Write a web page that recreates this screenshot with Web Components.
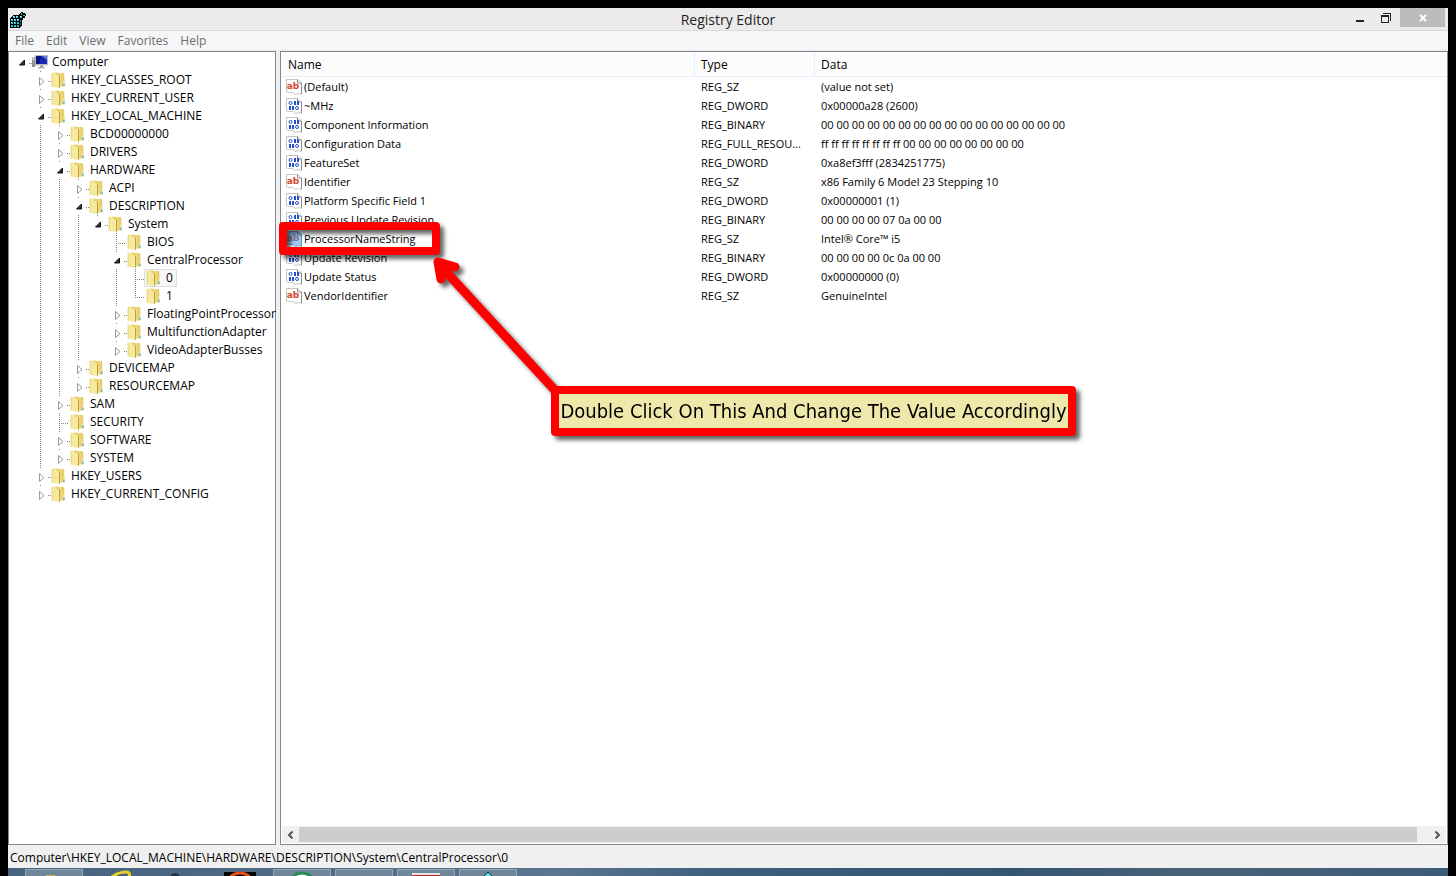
<!DOCTYPE html>
<html lang="en">
<head>
<meta charset="utf-8">
<title>Registry Editor</title>
<style>
  html, body { height: 100%; }
  body {
    margin: 0;
    background: #000;
    color: #000;
    font: 12px/18px "Open Sans", "Noto Sans", sans-serif;
    overflow: hidden;
  }
</style>
</head>
<body>
<reg-desktop>
  <reg-window>
    <reg-titlebar slot="title">Registry Editor</reg-titlebar>
    <reg-menubar slot="menu">
      <reg-menu>File</reg-menu>
      <reg-menu>Edit</reg-menu>
      <reg-menu>View</reg-menu>
      <reg-menu>Favorites</reg-menu>
      <reg-menu>Help</reg-menu>
    </reg-menubar>
    <reg-tree slot="tree">
      <reg-node class="root" label="Computer" icon="computer" state="open">
        <reg-node label="HKEY_CLASSES_ROOT" state="closed"></reg-node>
        <reg-node label="HKEY_CURRENT_USER" state="closed"></reg-node>
        <reg-node label="HKEY_LOCAL_MACHINE" state="open">
          <reg-node label="BCD00000000" state="closed"></reg-node>
          <reg-node label="DRIVERS" state="closed"></reg-node>
          <reg-node label="HARDWARE" state="open">
            <reg-node label="ACPI" state="closed"></reg-node>
            <reg-node label="DESCRIPTION" state="open">
              <reg-node label="System" state="open">
                <reg-node label="BIOS"></reg-node>
                <reg-node label="CentralProcessor" state="open">
                  <reg-node label="0" selected></reg-node>
                  <reg-node label="1"></reg-node>
                </reg-node>
                <reg-node label="FloatingPointProcessor" state="closed"></reg-node>
                <reg-node label="MultifunctionAdapter" state="closed"></reg-node>
                <reg-node label="VideoAdapterBusses" state="closed"></reg-node>
              </reg-node>
            </reg-node>
            <reg-node label="DEVICEMAP" state="closed"></reg-node>
            <reg-node label="RESOURCEMAP" state="closed"></reg-node>
          </reg-node>
          <reg-node label="SAM" state="closed"></reg-node>
          <reg-node label="SECURITY"></reg-node>
          <reg-node label="SOFTWARE" state="closed"></reg-node>
          <reg-node label="SYSTEM" state="closed"></reg-node>
        </reg-node>
        <reg-node label="HKEY_USERS" state="closed"></reg-node>
        <reg-node label="HKEY_CURRENT_CONFIG" state="closed"></reg-node>
      </reg-node>
    </reg-tree>
    <reg-values slot="values"></reg-values>
    <span slot="status">Computer\HKEY_LOCAL_MACHINE\HARDWARE\DESCRIPTION\System\CentralProcessor\0</span>
  </reg-window>
  <desk-taskbar></desk-taskbar>
  <note-callout slot="notes">Double Click On This And Change The Value Accordingly</note-callout>
</reg-desktop>

<script>
const define = (name, html, setup) => {
  const tpl = document.createElement('template');
  tpl.innerHTML = html;
  customElements.define(name, class extends HTMLElement {
    constructor() {
      super();
      this.attachShadow({ mode: 'open' }).append(tpl.content.cloneNode(true));
    }
    connectedCallback() { if (setup) setup(this, this.shadowRoot); }
  });
};

define('reg-desktop', `
  <style>
    :host { display: flex; flex-direction: column; box-sizing: border-box; height: 100vh; padding: 8px 8px 0; position: relative; }
    ::slotted(reg-window) { flex: 1; min-height: 0; }
  </style>
  <slot></slot><slot name="notes"></slot>`);

define('reg-window', `
  <style>
    :host { display: flex; flex-direction: column; background: #f0f0f0; }
    main { flex: 1; display: flex; gap: 4px; min-height: 0; }
    ::slotted(reg-tree) { flex: 0 0 268px; min-width: 0; }
    ::slotted(reg-values) { flex: 1; min-width: 0; }
    footer { height: 23px; line-height: 24px; padding: 1px 0 0 2px; white-space: nowrap; box-sizing: border-box; }
  </style>
  <slot name="title"></slot>
  <slot name="menu"></slot>
  <main><slot name="tree"></slot><slot name="values"></slot></main>
  <footer><slot name="status"></slot></footer>`);

define('reg-titlebar', `
  <style>
    :host { display: grid; grid-template-columns: 1fr auto 1fr; height: 22px; background: #ebebeb; border-bottom: 1px solid #d9d9d9; }
    h1 { margin: 0; font-size: 14px; line-height: 24px; font-weight: 400; color: #222; }
    .app { width: 16px; height: 16px; margin: 4px 0 0 2px; }
    .buttons { display: flex; justify-content: flex-end; padding-right: 3px; }
    button { border: 0; padding: 0; background: none; width: 26px; height: 19px; }
    button.close { width: 45px; background: #bcbcbc; margin-left: 1px; }
    svg { display: block; margin: 0 auto; }
  </style>
  <svg class="app" viewBox="0 0 16 16" aria-hidden="true" shape-rendering="crispEdges">
    <path d="M2 4h1v-1h6v-1h1v-1h1v-1h2v1h2v1h1v2h-1v2h-2v2h-1v6h-1v1h-1v1H0V6h1V5h1z" fill="#000"/>
    <path d="M3 4h2v2H3zM6 4h2v2H6zM1 7h2v2H1zM4 7h2v2H4zM7 7h2v2H7zM1 10h2v2H1zM4 10h2v2H4zM7 10h2v2H7zM1 13h2v2H1zM4 13h2v2H4zM7 13h2v2H7zM10 4h2v2h-2zM11 1h1v2h-1zM13 3h2v1h-2z" fill="#20cdd2"/>
    <path d="M3 4h1v1H3zM6 4h1v1H6zM1 7h1v1H1zM4 7h1v1H4zM7 7h1v1H7zM1 10h1v1H1zM4 10h1v1H4zM10 4h1v1h-1z" fill="#e4ffff"/>
    <path d="M10 8h1v2h-1zM10 11h1v2h-1z" fill="#0d8186"/>
  </svg>
  <h1><slot></slot></h1>
  <div class="buttons">
    <button aria-label="Minimize"><svg width="10" height="10" viewBox="0 0 10 10"><path d="M1 7h8v2H1z" fill="#222"/></svg></button>
    <button aria-label="Restore"><svg width="10" height="10" viewBox="0 0 10 10" shape-rendering="crispEdges"><path d="M2 0h8v8H9V1H2zM0 2h8v8H0zM1 4v5h6V4z" fill="#222" fill-rule="evenodd"/></svg></button>
    <button class="close" aria-label="Close"><svg width="8" height="8" viewBox="0 0 8 8"><path d="M1 1l6 6M7 1L1 7" stroke="#fff" stroke-width="2"/></svg></button>
  </div>`);

define('reg-menubar', `
  <style>
    :host { display: flex; height: 18px; background: #f5f6f7; border-bottom: 1px solid #e8e9ea; padding: 0 0 1px 1px; }
  </style>
  <slot></slot>`);

define('reg-menu', `
  <style>
    :host { display: block; }
    button { border: 0; background: none; font: inherit; line-height: 20px; color: #6d6d6d; padding: 0 6px; }
  </style>
  <button><slot></slot></button>`);

define('reg-tree', `
  <style>
    :host { display: block; box-sizing: border-box; background: #fff; border: 1px solid #828790; padding: 1px 0 0 3px; }
  </style>
  <slot></slot>`);

const folder = `<svg width="16" height="16" viewBox="0 0 16 16" aria-hidden="true">
  <defs>
    <linearGradient id="l" x1="0" x2="1"><stop offset="0" stop-color="#e9d478"/><stop offset=".4" stop-color="#f8eea6"/><stop offset="1" stop-color="#dfc560"/></linearGradient>
    <linearGradient id="r" x1="0" x2="1"><stop offset="0" stop-color="#cfae48"/><stop offset=".35" stop-color="#f0dc80"/><stop offset="1" stop-color="#e3c962"/></linearGradient>
  </defs>
  <path d="M6 1h6.500l.8 1v12.500H6z" fill="url(#r)"/>
  <path d="M.6 1 5 .3 7.600 1v14L5 15.600.6 14.500z" fill="url(#l)"/>
  <path d="M4.500 2.500 8 3.800V16l-3.500-1.200z" fill="#f6eaa0"/>
  <path d="M8 3.800 9 3.400v12L8 16z" fill="#c09c3a"/>
  <path d="M12 8.500h1.700v5.800L12 15z" fill="#f0e6b4"/>
  <path d="M12.300 11.500h1.200v2.500h-1.200z" fill="#3aa6ea"/></svg>`;
const computer = `<svg width="16" height="16" viewBox="0 0 16 16" aria-hidden="true">
  <path d="M0 3.5h3V13H0z" fill="#8d9092"/><path d="M.6 4.3h1.6v2H.6z" fill="#e8eaea"/><path d="M1 9h1v2H1z" fill="#7dc26b"/>
  <path d="M3 1h13v10.5H3z" fill="#b9bdc0"/><path d="M4 2h11v8H4z" fill="#1426b4"/>
  <path d="M4 2h5L7 10H4z" fill="#0a1580"/><path d="M10 2h5v4z" fill="#5a7be8"/>
  <path d="M8 11.500h3V13H8z" fill="#90959a"/><path d="M6 13h7v1.500H6z" fill="#b0b4b8"/></svg>`;
const twisties = {
  open: `<path d="M5 2h12v15H5z" fill="#fff"/><path d="M12.500 7v5H7.500z" fill="#333" stroke="#111"/>`,
  closed: `<path d="M5 2h12v15H5z" fill="#fff"/><path d="M8.500 6.500v8l4.500-4z" fill="#fff" stroke="#999"/>`
};

define('reg-node', `
  <style>
    :host {
      display: block;
      background: repeating-linear-gradient(#7f7f7f 0 1px, transparent 1px 2px) 9px 0 / 1px 100% no-repeat;
    }
    :host(:last-of-type) { background-size: 1px 10px; }
    :host(.root) { background: none; }
    .row { display: flex; height: 18px; }
    .twisty { flex: none; width: 18px; height: 18px; overflow: visible; }
    button {
      display: flex; align-items: center; gap: 4px; height: 18px; box-sizing: border-box;
      border: 1px solid transparent; background: none; padding: 0 3px 0 1px;
      font: inherit; line-height: 16px; color: #000; white-space: nowrap;
    }
    :host([selected]) button { background: #f7f7f7; border-color: #dedede; }
    svg { flex: none; }
    .kids { padding-left: 19px; }
  </style>
  <div class="row"><svg class="twisty" viewBox="0 0 18 18" aria-hidden="true"></svg><button role="treeitem"></button></div>
  <div class="kids"><slot></slot></div>`,
  (el, root) => {
    const state = el.getAttribute('state');
    const dots = state ? [17, 19] : [9, 11, 13, 15, 17];
    root.querySelector('.twisty').innerHTML = (twisties[state] || '') +
      dots.map(x => `<rect x="${x}" y="10" width="1" height="1" fill="#7f7f7f"/>`).join('');
    const b = root.querySelector('button');
    b.innerHTML = el.getAttribute('icon') ? computer : folder;
    const s = document.createElement('span');
    s.textContent = el.getAttribute('label');
    b.append(s);
  });

const VALUES = [
  ['s', '(Default)', 'REG_SZ', '(value not set)'],
  ['b', '~MHz', 'REG_DWORD', '0x00000a28 (2600)'],
  ['b', 'Component Information', 'REG_BINARY', '00 00 00 00 00 00 00 00 00 00 00 00 00 00 00 00'],
  ['b', 'Configuration Data', 'REG_FULL_RESOU...', 'ff ff ff ff ff ff ff ff 00 00 00 00 00 00 00 00'],
  ['b', 'FeatureSet', 'REG_DWORD', '0xa8ef3fff (2834251775)'],
  ['s', 'Identifier', 'REG_SZ', 'x86 Family 6 Model 23 Stepping 10'],
  ['b', 'Platform Specific Field 1', 'REG_DWORD', '0x00000001 (1)'],
  ['b', 'Previous Update Revision', 'REG_BINARY', '00 00 00 00 07 0a 00 00'],
  ['s sel', 'ProcessorNameString', 'REG_SZ', 'Intel® Core™ i5'],
  ['b', 'Update Revision', 'REG_BINARY', '00 00 00 00 0c 0a 00 00'],
  ['b', 'Update Status', 'REG_DWORD', '0x00000000 (0)'],
  ['s', 'VendorIdentifier', 'REG_SZ', 'GenuineIntel']
];

define('value-icon', `
  <style>
    :host { display: block; width: 16px; height: 16px; flex: none; }
    svg { display: block; }
    text { font: 700 9px "DejaVu Sans", sans-serif; text-anchor: middle; fill: #d4472a; }
    :host([kind~="s"]) .bin, :host([kind~="b"]) .str, .tint { display: none; }
    :host([kind~="sel"]) .tint { display: inline; }
  </style>
  <svg width="16" height="16" viewBox="0 0 16 16" aria-hidden="true">
    <path d="M.5.5h11l4 3.500v11.500l-3-1-3 1-3-2-3 0-3-.5z" fill="#fff" stroke="#c4c4c4"/>
    <path d="M11.500.5v3.500h4v11" fill="none" stroke="#8c8c8c"/>
    <text class="str" x="7" y="10">ab</text>
    <g class="bin" fill="#2450cf">
      <circle cx="4.500" cy="5" r="1.500" fill="none" stroke="#2450cf"/>
      <rect x="8" y="3" width="2" height="4"/><rect x="11" y="3" width="2" height="4"/>
      <rect x="3" y="8" width="2" height="4"/><rect x="6" y="8" width="2" height="4"/>
      <circle cx="11" cy="10" r="1.500" fill="none" stroke="#2450cf"/>
    </g>
    <path class="tint" d="M0 0h12l4 3v13l-3-1-3 1-3-2-3 0-4-.5z" fill="#3c96e6" opacity=".5"/>
  </svg>`);

define('reg-values', `
  <style>
    :host { display: flex; flex-direction: column; background: #fff; border: 1px solid #828790; overflow: hidden; }
    table { border-collapse: separate; border-spacing: 0; table-layout: fixed; width: 100%; }
    th { height: 22px; padding: 2px 0 0 6px; text-align: left; font-weight: 400; background: #fcfcfc; border-bottom: 1px solid #e5effb; border-right: 1px solid #e5effb; }
    th:first-child { padding-left: 7px; }
    th:last-child { border-right: 0; }
    .name { width: 406px; }
    .type { width: 113px; }
    td { height: 19px; padding: 0 0 0 6px; overflow: hidden; white-space: nowrap; font-size: 11px; line-height: 19px; }
    td:first-child { padding-left: 5px; }
    .cell { display: flex; align-items: center; gap: 2px; }
    .space { flex: 1; }
    .bar { display: flex; height: 17px; margin: 0 1px 1px; background: #f0f0f0; }
    .bar button { border: 0; background: none; padding: 0; width: 17px; }
    .bar svg { display: block; margin: auto; }
    .thumb { flex: 1; margin: 1px 12px 1px 0; background: #cdcdcd; }
  </style>
  <table>
    <thead><tr><th class="name" scope="col">Name</th><th class="type" scope="col">Type</th><th scope="col">Data</th></tr></thead>
    <tbody></tbody>
  </table>
  <div class="space"></div>
  <div class="bar">
    <button aria-label="Scroll left"><svg width="7" height="8" viewBox="0 0 7 8"><path d="M5.500.5 2 4l3.500 3.500" fill="none" stroke="#505050" stroke-width="2"/></svg></button>
    <div class="thumb"></div>
    <button aria-label="Scroll right"><svg width="7" height="8" viewBox="0 0 7 8"><path d="M1.500.5 5 4 1.500 7.500" fill="none" stroke="#505050" stroke-width="2"/></svg></button>
  </div>`,
  (el, root) => {
    root.querySelector('tbody').innerHTML = VALUES.map(([k, n, t, d]) =>
      `<tr><td><div class="cell"><value-icon kind="${k}"></value-icon><span>${n}</span></div></td><td>${t}</td><td>${d}</td></tr>`).join('');
  });

define('desk-taskbar', `
  <style>
    :host { display: flex; gap: 4px; height: 8px; padding-left: 17px; overflow: hidden; background: linear-gradient(90deg, #48637f, #4f6a84 20%, #5b7690 38%, #3c5f7e 50%, #355673 70%, #4a6279 82%, #3d5c78); }
    button { flex: none; width: 58px; height: 40px; margin-top: 1px; padding: 0; box-sizing: border-box; border: 1px solid transparent; background: none; display: flex; justify-content: center; }
    .on { border-color: #93a7b5; background: #6f8798; }
    svg { flex: none; }
  </style>
  <button class="on" aria-label="File Explorer"><svg width="32" height="32"><path d="M8 5h9l2 2v6H8z" fill="#c8b36a"/></svg></button>
  <button aria-label="Internet Explorer"><svg width="32" height="32"><path d="M12 7C18 2 27 1 29 3s-1 5-4 7" fill="none" stroke="#e8cf2d" stroke-width="3"/></svg></button>
  <button aria-label="Media player"><svg width="32" height="32"><circle cx="13" cy="8" r="5" fill="#26384a"/></svg></button>
  <button aria-label="Music"><svg width="32" height="32"><path d="M0 2h32v30H0z" fill="#000"/><circle cx="16" cy="17" r="14" fill="none" stroke="#e8501c" stroke-width="3"/></svg></button>
  <button class="on" aria-label="Browser"><svg width="32" height="32"><circle cx="16" cy="16" r="13" fill="#fff" stroke="#2a8a58" stroke-width="3"/></svg></button>
  <button class="on" aria-label="Folder window"></button>
  <button class="on" aria-label="Document"><svg width="32" height="32"><path d="M2 3h28v2H2z" fill="#e8e8e8"/><path d="M2 5h28v3H2z" fill="#b3252a"/></svg></button>
  <button class="on" aria-label="Registry Editor"><svg width="32" height="32"><path d="M16 2l7 7H9z" fill="#5fe0e4" stroke="#10303c"/></svg></button>`);

define('note-callout', `
  <style>
    :host { position: absolute; inset: 0; pointer-events: none; filter: drop-shadow(4px 4px 2px rgba(0, 0, 0, .6)); }
    .mark, .note { position: absolute; box-sizing: border-box; border: 8px solid #f00; border-radius: 4px; }
    .mark { left: 279px; top: 222px; width: 161px; height: 33px; }
    .note { left: 551px; top: 386px; width: 525px; height: 50px; background: #eee8aa; text-align: center; white-space: nowrap; font: 20px/34px "DejaVu Sans Condensed", "DejaVu Sans", sans-serif; }
    svg { position: absolute; left: 0; top: 0; width: 100%; height: 100%; }
  </style>
  <svg aria-hidden="true"><path d="M562 398 438 263M455 267l-17-5 3 17" fill="none" stroke="#f00" stroke-width="9" stroke-linecap="round" stroke-linejoin="round"/></svg>
  <div class="mark"></div>
  <div class="note"><slot></slot></div>`);
</script>
</body>
</html>
